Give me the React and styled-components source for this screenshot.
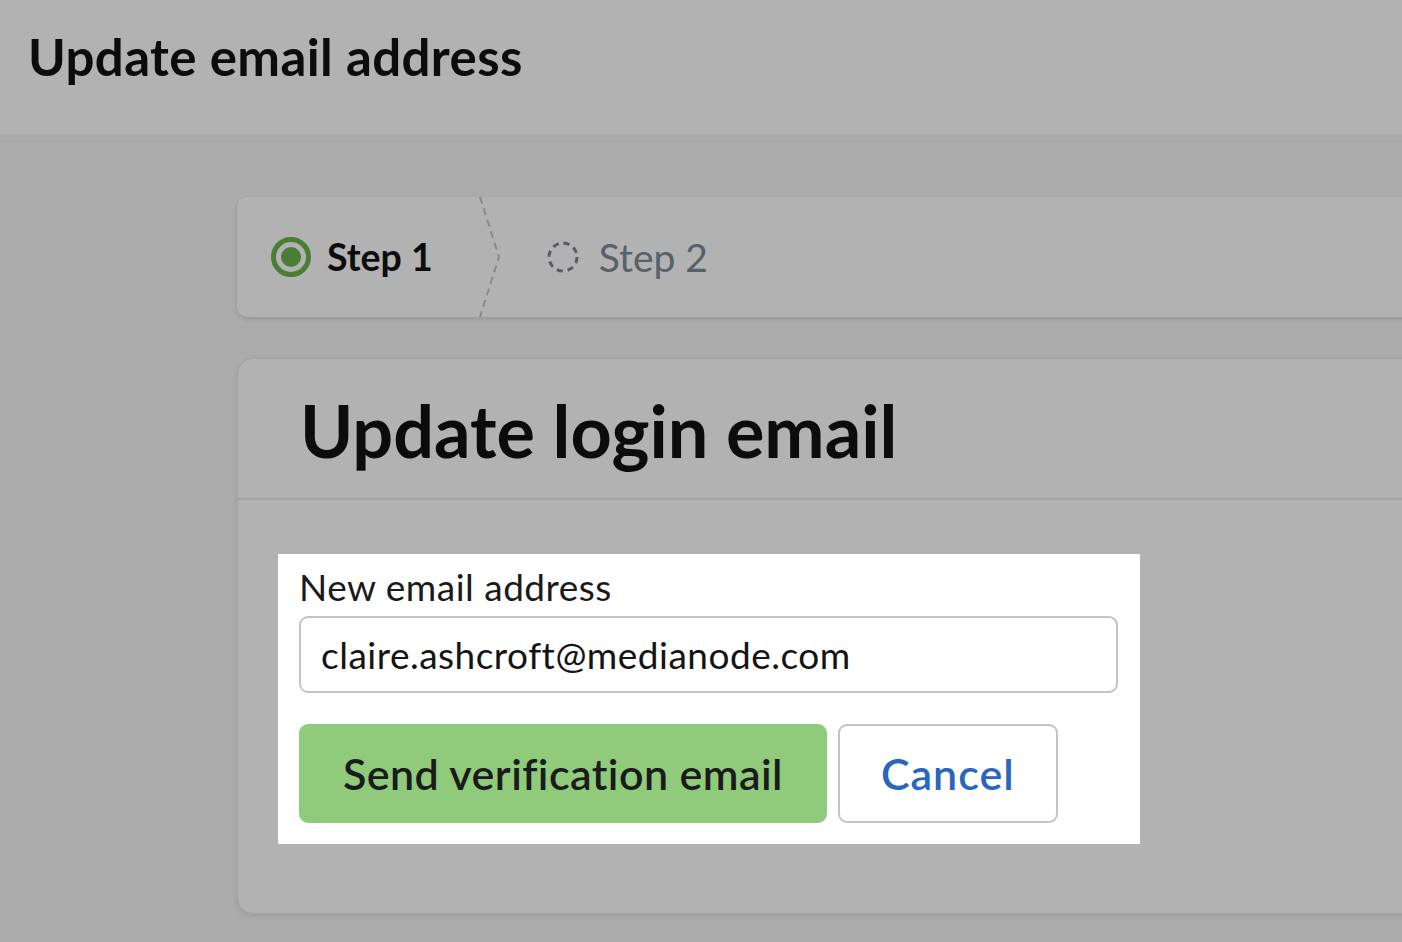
import React from 'react';
import styled, { createGlobalStyle } from 'styled-components';

const GlobalStyle = createGlobalStyle`
  html, body {
    margin: 0;
    padding: 0;
    background: #f6f6f6;
    overflow: hidden;
  }
  body {
    font-family: Lato, "Liberation Sans", Arial, sans-serif;
    color: #121212;
  }
  * {
    box-sizing: border-box;
  }
`;

const Page = styled.div`
  min-height: 100vh;
  width: 100%;
  display: flex;
  flex-direction: column;
`;

const TopBar = styled.header`
  background: #fff;
  border-bottom: 2px solid #ececf2;
  height: 137px;
  display: flex;
  align-items: flex-start;
  padding: 22px 28px 0;
`;

const PageTitle = styled.h1`
  margin: 0;
  font-size: 51px;
  line-height: 70px;
  font-weight: 700;
  letter-spacing: 0.4px;
  color: #121212;
`;

const Content = styled.main`
  display: flex;
  flex-direction: column;
  gap: 41px;
  padding: 60px 0 0 237px;
  width: 1560px;
`;

const StepsCard = styled.div`
  height: 120px;
  background: #fff;
  border-radius: 10px;
  box-shadow: 0 2px 5px rgba(0, 0, 0, 0.14);
  display: flex;
  align-items: stretch;
  overflow: hidden;
`;

const Step = styled.div`
  display: flex;
  align-items: center;
  gap: 16px;
  padding-left: ${p => p.$padLeft}px;
  padding-right: ${p => p.$padRight}px;
`;

const StepIcon = styled.svg`
  width: 40px;
  height: 40px;
  flex-shrink: 0;
`;

const StepLabel = styled.span`
  font-size: ${p => (p.$active ? 37.5 : 39)}px;
  line-height: 1;
  font-weight: ${p => (p.$active ? 700 : 400)};
  color: ${p => (p.$active ? '#121212' : '#808a96')};
`;

const Chevron = styled.svg`
  width: 24px;
  height: 120px;
  flex-shrink: 0;
`;

const MainCard = styled.section`
  background: #fff;
  border: 1px solid #e9e9ef;
  border-radius: 16px;
  box-shadow: 0 2px 6px rgba(0, 0, 0, 0.1);
  height: 556px;
  display: flex;
  flex-direction: column;
`;

const CardHeader = styled.div`
  border-bottom: 2px solid #ececf2;
  height: 141px;
  padding: 26px 62px 0;
`;

const CardTitle = styled.h2`
  margin: 0;
  font-size: 72px;
  line-height: 90px;
  font-weight: 700;
  color: #121212;
`;

const CardBody = styled.div`
  padding: 54px 40px 0;
  display: flex;
`;

const Overlay = styled.div`
  position: fixed;
  inset: 0;
  background: rgba(0, 0, 0, 0.3);
  z-index: 10;
  pointer-events: none;
`;

const Spotlight = styled.form`
  position: relative;
  z-index: 11;
  background: #fff;
  width: 862px;
  padding: 10px 22px 21px 21px;
  display: flex;
  flex-direction: column;
`;

const FieldLabel = styled.label`
  font-size: 37px;
  line-height: 46px;
  letter-spacing: 0.5px;
  color: #1a1a1a;
`;

const TextInput = styled.input`
  margin-top: 6px;
  height: 77px;
  width: 100%;
  border: 2px solid #c0c3c8;
  border-radius: 9px;
  padding: 0 20px;
  font-family: inherit;
  font-size: 37px;
  letter-spacing: 0.5px;
  color: #141414;
  background: #fff;
  outline: none;
`;

const Actions = styled.div`
  display: flex;
  gap: 11px;
  margin-top: 31px;
`;

const Button = styled.button`
  height: 99px;
  padding: 0 ${p => (p.$primary ? 42 : 41)}px;
  border-radius: 9px;
  font-family: inherit;
  font-size: 43px;
  font-weight: 600;
  letter-spacing: ${p => (p.$primary ? 0.42 : 1)}px;
  cursor: pointer;
  background: ${p => (p.$primary ? '#8fcb7b' : '#fff')};
  color: ${p => (p.$primary ? '#1b1b1b' : '#2a66c0')};
  border: ${p => (p.$primary ? '2px solid #8fcb7b' : '2px solid #c0c3c8')};
`;

const ActiveDot = () => (
  <StepIcon viewBox="0 0 40 40">
    <circle cx="20" cy="20" r="17.5" fill="none" stroke="#6ab54c" strokeWidth="5" />
    <circle cx="20" cy="20" r="10" fill="#6ab54c" />
  </StepIcon>
);

const PendingDot = () => (
  <StepIcon viewBox="0 0 40 40">
    <circle
      cx="20"
      cy="20"
      r="14"
      fill="none"
      stroke="#7c8590"
      strokeWidth="3"
      strokeDasharray="6.2 4.8"
    />
  </StepIcon>
);

const App = () => {
  return (
    <Page>
      <GlobalStyle />
      <TopBar>
        <PageTitle>Update email address</PageTitle>
      </TopBar>
      <Content>
        <StepsCard>
          <Step $padLeft={34} $padRight={45}>
            <ActiveDot />
            <StepLabel $active>Step 1</StepLabel>
          </Step>
          <Chevron viewBox="0 0 24 120">
            <path
              d="M2 0 L21 60 L2 120"
              fill="none"
              stroke="#c4c4c6"
              strokeWidth="2"
              strokeDasharray="7 5"
            />
          </Chevron>
          <Step $padLeft={41} $padRight={40}>
            <PendingDot />
            <StepLabel>Step 2</StepLabel>
          </Step>
        </StepsCard>

        <MainCard>
          <CardHeader>
            <CardTitle>Update login email</CardTitle>
          </CardHeader>
          <CardBody>
            <Spotlight onSubmit={e => e.preventDefault()}>
              <FieldLabel htmlFor="new-email">New email address</FieldLabel>
              <TextInput id="new-email" type="email" defaultValue="claire.ashcroft@medianode.com" />
              <Actions>
                <Button type="submit" $primary>Send verification email</Button>
                <Button type="button">Cancel</Button>
              </Actions>
            </Spotlight>
          </CardBody>
        </MainCard>
      </Content>
      <Overlay />
    </Page>
  );
};

export default App;
